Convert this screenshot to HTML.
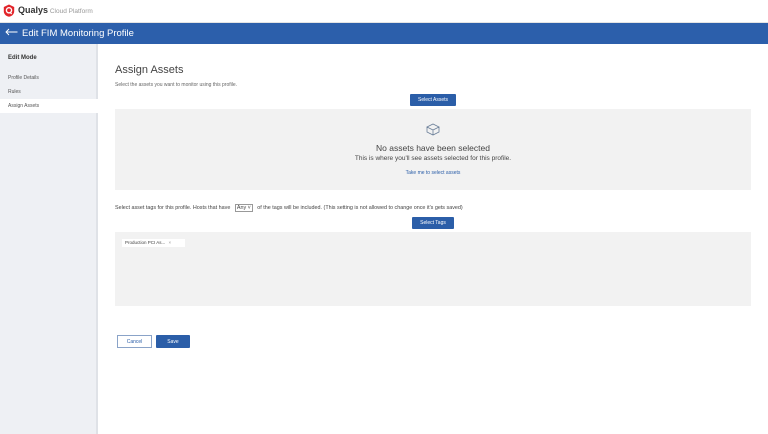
<!DOCTYPE html><html><head><style>
body{margin:0;width:768px;height:434px;font-family:"Liberation Sans",sans-serif;background:#fff;position:relative;overflow:hidden}
.a{position:absolute}
.btn{position:absolute;background:#2b5ea8;color:#fff;font-size:5px;display:flex;align-items:center;justify-content:center;border-radius:1px}
</style></head><body>
<div class="a" style="left:0;top:0;width:768px;height:22px;background:#fff;border-bottom:1px solid #e4e4e4"></div>
<svg class="a" style="left:3px;top:4px" width="12" height="13" viewBox="0 0 12 13"><path d="M6 0.5L11.2 3v4.2c0 3-2.5 5-5.2 5.6C3.3 12.2.8 10.2.8 7.2V3z" fill="#e2242a"/><circle cx="6" cy="6.3" r="2.6" fill="none" stroke="#fff" stroke-width="1.4"/><path d="M7 8l1.6 2" stroke="#fff" stroke-width="1.3"/></svg>
<div class="a" style="left:18px;top:5px;font-size:9px;font-weight:bold;color:#333">Qualys<span style="font-weight:normal;font-size:6.5px;color:#999"> Cloud Platform</span></div>
<div class="a" style="left:0;top:23px;width:768px;height:21px;background:#2c5fab"></div>
<svg class="a" style="left:5px;top:28px" width="13" height="8" viewBox="0 0 13 8"><path d="M12.5 4H1M4 1L1 4l3 3" fill="none" stroke="#fff" stroke-width="0.9"/></svg>
<div class="a" style="left:22px;top:28px;font-size:9.5px;color:#fff">Edit FIM Monitoring Profile</div>
<div class="a" style="left:0;top:44px;width:96px;height:390px;background:#eef0f4;border-right:2px solid #dfe2e7"></div>
<div class="a" style="left:8px;top:55px;font-size:6px;color:#333;font-weight:bold">Edit Mode</div>
<div class="a" style="left:8px;top:75px;font-size:5px;color:#555">Profile Details</div>
<div class="a" style="left:8px;top:89px;font-size:5px;color:#555">Rules</div>
<div class="a" style="left:0;top:99px;width:98px;height:14px;background:#fff"></div>
<div class="a" style="left:8px;top:103px;font-size:5px;color:#555">Assign Assets</div>
<div class="a" style="left:115px;top:64px;font-size:11px;color:#444">Assign Assets</div>
<div class="a" style="left:115px;top:82px;font-size:5px;color:#666">Select the assets you want to monitor using this profile.</div>
<div class="btn" style="left:410px;top:94px;width:46px;height:12px">Select Assets</div>
<div class="a" style="left:115px;top:109px;width:636px;height:81px;background:#f2f2f2"></div>
<svg class="a" style="left:425px;top:123px" width="16" height="13" viewBox="0 0 16 13"><path d="M2 4l6-3 6 3-6 3zM2 4v5l6 3 6-3V4M8 7v5" fill="none" stroke="#6b7f99" stroke-width="0.8"/></svg>
<div class="a" style="left:115px;top:143px;width:636px;text-align:center;font-size:8.5px;color:#444">No assets have been selected</div>
<div class="a" style="left:115px;top:155px;width:636px;text-align:center;font-size:6.5px;color:#444">This is where you'll see assets selected for this profile.</div>
<div class="a" style="left:115px;top:170px;width:636px;text-align:center;font-size:5px;color:#2b5ea8">Take me to select assets</div>
<div class="a" style="left:115px;top:204px;font-size:5.4px;color:#444;white-space:nowrap">Select asset tags for this profile. Hosts that have <span style="display:inline-block;border:1px solid #999;padding:0 1px;margin:0 3px">Any ˅</span> of the tags will be included. (This setting is not allowed to change once it's gets saved)</div>
<div class="btn" style="left:412px;top:217px;width:42px;height:12px">Select Tags</div>
<div class="a" style="left:115px;top:232px;width:636px;height:74px;background:#f2f2f2"></div>
<div class="a" style="left:122px;top:239px;width:60px;height:8px;background:#fff;font-size:4.5px;color:#444;line-height:8px;padding-left:3px">Production PCI As... <span style="color:#999;margin-left:2px">×</span></div>
<div class="a" style="left:117px;top:335px;width:33px;height:11px;border:1px solid #8aa3c8;font-size:5px;color:#2b5ea8;display:flex;align-items:center;justify-content:center">Cancel</div>
<div class="btn" style="left:156px;top:335px;width:34px;height:13px">Save</div>
</body></html>
